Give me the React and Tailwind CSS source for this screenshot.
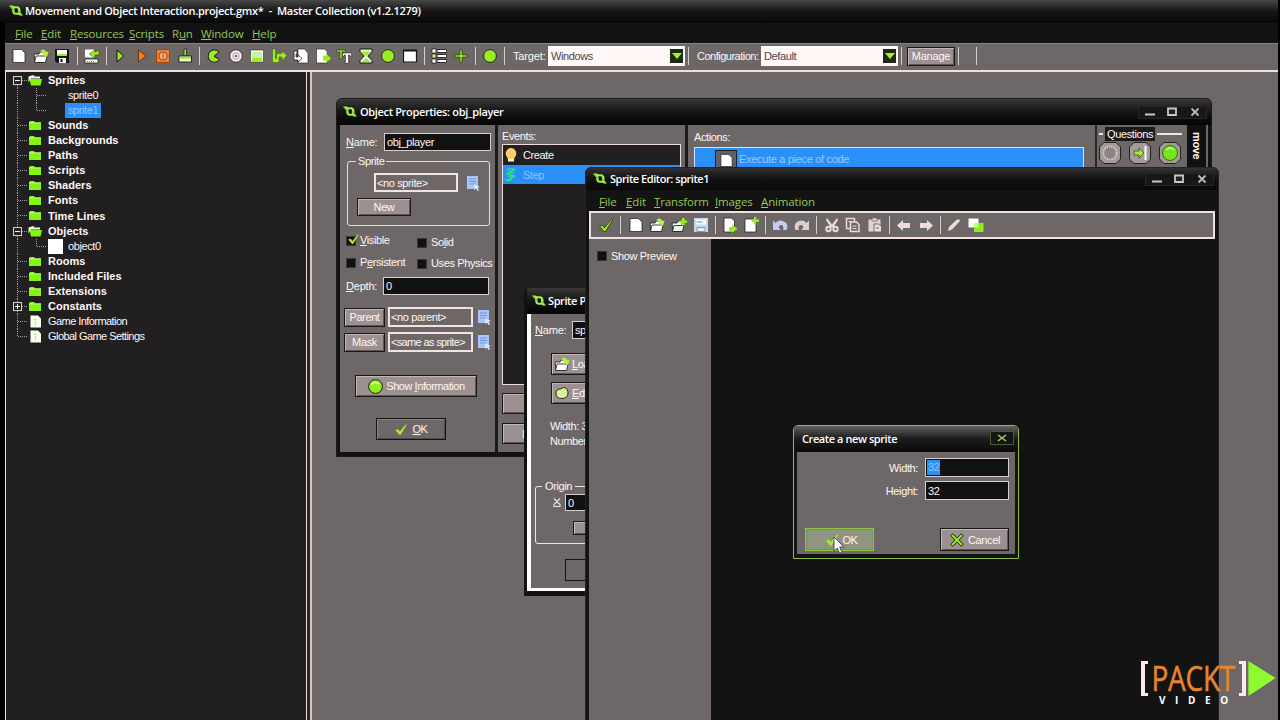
import React from "react";

const G = "#9bec26";
const ink = "#151515";

const Svg = ({ children, className = "w-4 h-4", vb = "0 0 16 16" }) => (
  <svg viewBox={vb} className={`shrink-0 ${className}`}>{children}</svg>
);

const icons = {
  page: <path d="M2 1.500h8.500l3.500 3.500v9.500H2z" fill="#fff" stroke={ink} strokeWidth=".7" />,
  open: (
    <>
      <path d="M1 6h5l1-2h5v10H2z" fill="#fdfdf4" stroke={ink} strokeWidth=".8" />
      <path d="M1.500 14.500l1.500-6.500h11l-1.500 6.500z" fill="#fff" stroke={ink} strokeWidth=".8" />
      <path d="M7 3.500Q10-.5 13.500 4l2-.5-1.500 5.500-5-2.500 1.800-1Q9.500 3.300 7 3.500z" fill="#b4f03c" />
    </>
  ),
  openAdd: (
    <>
      <path d="M1 6h5l1-2h4v10H2z" fill="#fdfdf4" stroke={ink} strokeWidth=".8" />
      <path d="M1.500 14.500l1.500-6h10l-1.500 6z" fill="#e6f7e8" stroke={ink} strokeWidth=".8" />
      <path d="M11 1h2.500v2.500H16V6h-2.500v2.500H11V6H8.500V3.500H11z" fill={G} />
    </>
  ),
  save: (
    <>
      <path d="M1 1h14v14H3l-2-2z" fill={ink} />
      <path d="M3 2h10v6H3z" fill="#fff" />
      <path d="M3 6h10v2H3z" fill={G} />
      <path d="M5 10h7v5H5z" fill="#fff" />
      <path d="M6.500 11h2v3h-2z" fill={ink} />
    </>
  ),
  savePale: (
    <>
      <path d="M1 1h14v14H1z" fill="#c8d8ea" />
      <path d="M3 2.500h10v5H3z" fill="#f4f8ff" />
      <path d="M3.500 5h6M4 10.500h8v4H4z" stroke="#8296aa" fill="#e4edf8" />
    </>
  ),
  exportBar: (
    <>
      <path d="M1 1.500h9v8H1z" fill="#fff" />
      <path d="M1 11h13v4H1z" fill="#f8fff0" stroke={ink} strokeWidth=".7" />
      <path d="M15 2v5h-4v3L5 6l6-4v2z" fill={G} stroke={ink} strokeWidth=".4" />
      <path d="M3 13.500h7" stroke="#888" strokeDasharray="1 1" />
    </>
  ),
  play: <path d="M5 2v12l6.500-6z" fill={G} stroke={ink} strokeWidth="1" />,
  debug: <path d="M4.500 2v12l7.500-6z" fill="#f47a1c" stroke="#6b3410" strokeWidth="1" />,
  stop: (
    <>
      <path d="M1.500 1.500h13v13h-13z" fill="#ee8136" stroke="#9a4410" />
      <circle cx="8" cy="8" r="4" fill="#f9b27a" stroke="#a14d14" strokeWidth="1" />
      <path d="M8 5.500v5" stroke="#a14d14" />
    </>
  ),
  broom: (
    <>
      <path d="M7 1h2.500v7H7z" fill={G} stroke={ink} strokeWidth=".7" />
      <path d="M2 8h12.500v6H2z" fill="#f5ffd8" stroke={ink} strokeWidth=".9" />
      <path d="M2.500 9h11.500v1.800H2.500z" fill={G} />
    </>
  ),
  pac: <path d="M13 4A6.200 6.200 0 1 0 13.500 11.500L8 8.300z" fill={G} stroke={ink} strokeWidth="1" />,
  sound: (
    <>
      <circle cx="8" cy="8" r="6.300" fill="#f4e8ec" stroke={ink} strokeWidth=".8" />
      <circle cx="8" cy="8" r="3.300" fill="none" stroke="#b3a6ab" />
      <circle cx="8" cy="8" r="1.200" fill="#6a6064" />
    </>
  ),
  bg: (
    <>
      <path d="M1.500 2h13v12h-13z" fill="#f4fde8" stroke={ink} strokeWidth=".5" />
      <path d="M3 10h10v3H3z" fill={G} />
      <path d="M3 4h10v6H3z" fill="#c9f2a4" />
    </>
  ),
  path: <path d="M1.500 1v13.500h6.500V9h3v3.500l5-5-5-4.500v2.500H5.500v5H4.500V1z" fill={G} stroke="#3e5a14" strokeWidth=".5" />,
  script: (
    <>
      <path d="M5 1h6.500l3.500 4v10H5z" fill="#fff" stroke={ink} strokeWidth=".6" />
      <path d="M1 3h3v3H3v3h2V7l4 3.500L5 14v-2H1z" fill="#fdfff4" stroke={ink} strokeWidth=".7" />
    </>
  ),
  shader: (
    <>
      <path d="M1.500 1h8l3 3v11h-11z" fill="#fff" stroke={ink} strokeWidth=".6" />
      <path d="M8 7.500h3V5l5 5.500-5 4.500v-2.500H8z" fill={G} />
    </>
  ),
  tt: (
    <>
      <path d="M1 2h8v3H7.500V3.800H6V11H3.800V3.800H2.500V5H1z" fill={G} stroke={ink} strokeWidth=".5" />
      <path d="M6.500 5h9v3.500H14V7h-1.500v7h1v1H8.500v-1h1V7H8v1.500H6.500z" fill="#fff" stroke={ink} strokeWidth=".5" />
    </>
  ),
  hourglass: (
    <>
      <path d="M2 1h12v2.500L9.800 8l4.200 4.500V15H2v-2.500L6.200 8 2 3.500z" fill="#e9ffd0" stroke={ink} strokeWidth="1" />
      <path d="M3.500 3.500h9L8 8zM8 10l4.500 4h-9z" fill={G} />
    </>
  ),
  ball: <circle cx="8" cy="8" r="6.400" fill={G} stroke={ink} strokeWidth=".9" />,
  info: (
    <>
      <circle cx="8" cy="8" r="6.500" fill="#8ff01c" stroke={ink} strokeWidth=".9" />
      <path d="M4.500 6a4.500 4.500 0 0 1 7 0" stroke="#e2ffb0" strokeWidth="1.200" fill="none" />
    </>
  ),
  room: (
    <>
      <path d="M1.500 2h13v12h-13z" fill="#fff" stroke={ink} strokeWidth="1.200" />
      <path d="M1.500 2h13v1.500h-13z" fill={ink} />
    </>
  ),
  list: (
    <>
      <path d="M1 1h4v4H1zM1 11h4v4H1z" fill="#fff" stroke={ink} strokeWidth=".7" />
      <path d="M1 6h4v4H1z" fill="#dff26a" stroke={ink} strokeWidth=".7" />
      <path d="M6 3h9.500M6 8h9.500M6 13h9.500" stroke={ink} strokeWidth="3.400" />
      <path d="M6.500 3h8.500M6.500 8h8.500M6.500 13h8.500" stroke="#fff" strokeWidth="1.900" />
    </>
  ),
  plus: <path d="M6.800 1.800h2.400v5h5v2.400h-5v5H6.800v-5h-5V6.800h5z" fill={G} stroke="#24340c" strokeWidth=".8" />,
  check: <path d="M1.500 9l3-.8L6.500 11 13.500 2l1.200.5L7.500 14.500 6 14.500z" fill={G} stroke="#1c2808" strokeWidth=".7" />,
  checkBare: <path d="M1 8.500l3.500-.8L6.500 10.500 14 1.500l1 .5L7.500 14.500H6z" fill="#a2f02c" />,
  pageNext: (
    <>
      <path d="M2 1h7.500l3 3v11H2z" fill="#fff" stroke={ink} strokeWidth=".7" />
      <path d="M7 10h3V7.500l5.500 4.500-5.500 4v-2H7z" fill={G} />
    </>
  ),
  pageAdd: (
    <>
      <path d="M2 2h11v13H2z" fill="#fff" stroke={ink} strokeWidth=".7" />
      <path d="M11 0h2.200v2.500H16V5h-2.800v2.500H11V5H8.500V2.500H11z" fill={G} />
    </>
  ),
  undo: <path d="M1 3.500l2.500 2.500Q7 2 12 4.500T14.500 13H11q1.500-5-2-5-1.500 0-2.500 2l2 3H1z" fill="#c4cdec" />,
  redo: <path d="M15 3.500l-2.500 2.500Q9 2 4 4.500T1.500 13H5Q3.500 8 7 8q1.500 0 2.500 2l-2 3H15z" fill="#e2ced2" />,
  cut: (
    <>
      <path d="M3 1l5 6.500L13 1l1 2-4.500 7h-3L2 3z" fill="#f0dada" />
      <circle cx="4.500" cy="12" r="2.200" fill="none" stroke="#f0dada" strokeWidth="2" />
      <circle cx="11.500" cy="12" r="2.200" fill="none" stroke="#f0dada" strokeWidth="2" />
    </>
  ),
  copy: (
    <>
      <path d="M1.500 1.500h8v10h-8z" fill="#6d6867" stroke="#f0dada" strokeWidth="1.500" />
      <path d="M5.500 5h6l2.500 2.500V14.500H5.500z" fill="#6d6867" stroke="#f0dada" strokeWidth="1.500" />
      <path d="M7.500 9h4M7.500 11.500h4M3.500 4.500h4" stroke="#f0dada" strokeWidth="1.200" />
    </>
  ),
  paste: (
    <>
      <path d="M1.500 2.500h12v12h-12z" fill="#e6d2d2" />
      <path d="M5 1h5v3H5z" fill="#f0dada" stroke="#6d6867" strokeWidth=".8" />
      <path d="M7 7h4.500L14.500 9.500V15H7z" fill="#f0dada" stroke="#6d6867" />
      <path d="M9 11h3" stroke="#6d6867" />
    </>
  ),
  left: <path d="M1 8.500l6-5.500v3h7v5H7v3z" fill="#f0dada" />,
  right: <path d="M15 8.500L9 3v3H2v5h7v3z" fill="#f0dada" />,
  pencil: <path d="M2 14l1-4L11 2.500q2.500-1 3 1.500L6 12.500z" fill="#f0dada" />,
  layers: (
    <>
      <path d="M0.500 1.500h10v9h-10z" fill="#fffdf4" />
      <path d="M6 6h9.500v9H6z" fill="#8fea20" />
      <path d="M6 6h4.500v4.500H6z" fill="#c8f58c" />
    </>
  ),
  menuList: (
    <>
      <path d="M2 1h11v13H2z" fill="#a9c6f8" />
      <path d="M4 4h7M4 6.500h7M4 9h7" stroke="#6f95dc" />
      <path d="M9 9l6 3-2.500.8L14 15.500l-1.500.5-1-2.500L9.500 15z" fill="#dce8ff" />
    </>
  ),
  shape: (
    <path d="M2 8.500Q2 4 6.500 4l3-1.500Q14 3 14 8t-6 5.500Q2 13.500 2 8.500z" fill="#d9f59a" stroke={ink} strokeWidth=".9" />
  ),
  x: (
    <>
      <path d="M2.500 2.500l11 11M13.500 2.500l-11 11" stroke="#1c2808" strokeWidth="3.600" />
      <path d="M3 3l10 10M13 3L3 13" stroke={G} strokeWidth="2" />
    </>
  ),
  bulb: (
    <>
      <path d="M8 1a5.500 5.500 0 0 1 3.500 9.500V12h-7v-1.500A5.500 5.500 0 0 1 8 1z" fill="#fbcf6c" />
      <path d="M5 12h6v2.500H5z" fill="#fff6dc" />
    </>
  ),
  step: (
    <>
      <path d="M4 3q4-2 8 0M3 6.500q5-2 8-.5M5 10q4-1.500 7 0M2.500 13.500q4-1.500 6.500 0" stroke="#1fd2a0" strokeWidth="2" fill="none" />
      <path d="M11 2L5 7l6 2-6 5" stroke="#3be27a" strokeWidth="1.400" fill="none" />
    </>
  ),
};

const Icon = ({ n, className }) => <Svg className={className}>{icons[n]}</Svg>;
const Cell = ({ n, className = "w-[21.75px]" }) => (
  <span className={`flex shrink-0 justify-center ${className}`}><Icon n={n} className="h-[16px] w-[16px]" /></span>
);
const Sep = ({ className = "w-2" }) => (
  <span className={`flex shrink-0 justify-center ${className}`}><i className="h-[18px] w-px bg-[#d9cccc]" /></span>
);

const Logo = () => (
  <Svg vb="0 0 14 12" className="h-[12px] w-[14px]">
    <path d="M0 .5h4l1 .8h3.500q2.800 .5 3 3.500v2.700l2.500 3h-3.500l-.8-.8H7q-3.500 0-3.800-3.500V4.500z" fill="#a4ec4a" />
    <path d="M5.500 3.800q0-.5.700-.5h1.500q1.300 0 1.300 1.500v2.300q0 .6-.7.600H7q-1.500 0-1.500-1.500z" fill="#0d120a" />
    <path d="M0 .5L5 5M9 5.500l5 5" stroke="#5f9426" strokeWidth=".6" />
  </Svg>
);

const Title = ({ children, className = "" }) => (
  <span className={`whitespace-pre font-['Open_Sans',sans-serif] text-[11px] font-semibold leading-4 text-white ${className}`}>{children}</span>
);

const Menu = ({ items, className }) => (
  <nav className={`flex font-['Open_Sans',sans-serif] text-[11.5px] leading-4 tracking-[-0.15px] text-[#97c756] ${className}`}>
    {items.map(([a, u, b, w]) => (
      <span key={a + u + b} className={`shrink-0 whitespace-nowrap ${w}`}>{a}<u className="underline-offset-1">{u}</u>{b}</span>
    ))}
  </nav>
);

const Win = ({ children, className }) => (
  <section className={`absolute flex flex-col overflow-hidden ${className}`}>{children}</section>
);

const WinButtons = () => (
  <div className="flex h-[13px] w-[69px] items-center justify-around border border-[#252525] bg-[#171717]">
    <Svg vb="0 0 12 10" className="h-[10px] w-[12px]"><path d="M1 7.500h10" stroke="#cfc6c6" strokeWidth="2" /></Svg>
    <Svg vb="0 0 12 10" className="h-[10px] w-[12px]"><path d="M2 1.500h8v6.500H2z" fill="#222" stroke="#cfc6c6" strokeWidth="1.800" /></Svg>
    <Svg vb="0 0 12 10" className="h-[10px] w-[12px]"><path d="M2.500 1.500l7 7M9.500 1.500l-7 7" stroke="#b9bdb0" strokeWidth="1.800" /></Svg>
  </div>
);

const Field = ({ children, className }) => (
  <span className={`flex items-center overflow-hidden whitespace-nowrap border border-[#d8cccc] bg-[#111] pl-[2px] ${className}`}>{children}</span>
);
const Slot = ({ children, className }) => (
  <span className={`flex items-center whitespace-nowrap border-2 border-[#f3e2e2] pl-px ${className}`}>{children}</span>
);
const Btn = ({ children, className }) => (
  <span className={`flex items-center justify-center border border-[#1a1818] bg-[#9c9090] shadow-[inset_1px_1px_0_#c2b6b6,inset_-1px_-1px_0_#5d5656] ${className}`}>{children}</span>
);
const Box = ({ on }) => (
  <i className="flex h-[10px] w-[10px] shrink-0 border border-[#3a3636] bg-[#111]">{on && <Icon n="checkBare" className="-mt-[4px] h-[12px] w-[13px]" />}</i>
);

const rows = [
  ["Sprites", "open", "-"], ["sprite0", "child"], ["sprite1", "sel"], ["Sounds", "dir"], ["Backgrounds", "dir"], ["Paths", "dir"],
  ["Scripts", "dir"], ["Shaders", "dir"], ["Fonts", "dir"], ["Time Lines", "dir"], ["Objects", "open", "-"], ["object0", "obj"],
  ["Rooms", "dir"], ["Included Files", "dir"], ["Extensions", "dir"], ["Constants", "dir", "+"], ["Game Information", "file"], ["Global Game Settings", "last"],
];

const Row = ({ label, kind, mark }) => {
  const child = kind === "child" || kind === "sel" || kind === "obj";
  const first = label === "Sprites";
  return (
    <li className="flex h-[15.12px] items-center">
      <Svg vb="0 0 42 15" className="h-[15.12px] w-[42px]">
        <g stroke="#a9a4a4" strokeWidth="1" strokeDasharray="1 1">
          <path d={first ? "M11.500 8V15" : kind === "last" ? "M11.500 0V8" : "M11.500 0V15"} />
          {child ? <path d={kind === "child" ? "M30.500 0V15M31 7.500h10" : "M30.500 0V8M31 7.500h10"} /> : <path d="M12 7.500h10" />}
        </g>
        {mark && <rect x="7.500" y="3.500" width="8" height="8" fill="#222" stroke="#d8d4cc" />}
        {mark && <path d={mark === "+" ? "M9 7.500h5M11.500 5v5" : "M9 7.500h5"} stroke="#fff" />}
        {kind === "dir" && <path d="M23 4.500l1-1.500h4l1 1.500h6V12H23z" fill="#84f412" />}
        {kind === "dir" && <path d="M23 4.800h12" stroke="#d9ffae" strokeWidth=".8" />}
        {kind === "open" && <path d="M22.500 9.500V3.500l5-1.500 1 1.500h5.500v2H25z" fill="#f2ffe0" />}
        {kind === "open" && <path d="M25 12.500l-1.500-6.500h12.500l-1.500 6.500z" fill="#84f412" />}
        {(kind === "file" || kind === "last") && <path d="M24.500 1.500h7.500l3 3V13.500h-10.500z" fill="#f7fff0" />}
        {(kind === "file" || kind === "last") && <path d="M28 5.500h3M29.500 7v4" stroke="#b7e89a" />}
      </Svg>
      {kind === "obj" && <i className="h-[15px] w-[15px] bg-white" />}
      {child ? (
        <span className={kind === "sel" ? "ml-[17px] bg-[#2a90f8] px-[3px] leading-[15px] tracking-[-0.4px] text-[#8cc6ff]" : kind === "obj" ? "ml-[5px] leading-[15px] tracking-[-0.4px]" : "ml-[20px] leading-[15px] tracking-[-0.4px]"}>{label}</span>
      ) : (
        <span className={kind === "file" || kind === "last" ? "leading-[15px] tracking-[-0.56px]" : "font-bold leading-[15px] tracking-[0.02px]"}>{label}</span>
      )}
    </li>
  );
};

const Select = ({ children }) => (
  <span className="flex h-[20px] w-[137px] shrink-0 items-center justify-between bg-[#fff6f6] pl-[3px] pr-[2px] text-[#4c4848]">
    {children}
    <i className="flex h-[14px] w-[13px] items-center justify-center bg-[#1c2a10]">
      <Svg vb="0 0 10 6" className="h-[6px] w-[10px]"><path d="M0 0h10L5 6z" fill="#a6f02c" /></Svg>
    </i>
  </span>
);

const ObjectProperties = () => (
  <Win className="left-[336px] top-[98px] h-[359px] w-[876px] rounded-t-[6px] border border-[#1a1919] bg-[#131212]">
    <header className="flex h-[26px] shrink-0 items-center justify-between bg-gradient-to-b from-[#3a3838] via-[#151515] to-[#050505] pl-[6px] pr-[4px]">
      <div className="flex items-center gap-[3px]"><Logo /><Title className="tracking-[-0.34px]">Object Properties: obj_player</Title></div>
      <WinButtons />
    </header>
    <div className="mx-[3px] mb-[4px] flex min-h-0 flex-1 bg-[#6d6867]">
      <div className="flex w-[155px] shrink-0 flex-col pl-[6px]">
        <div className="mt-[8px] flex h-[18px] items-center"><span className="w-[38px] tracking-[-0.2px]"><u>N</u>ame:</span><Field className="h-[18px] w-[107px]">obj_player</Field></div>
        <fieldset className="ml-[1px] mt-[3px] flex h-[72px] w-[143px] flex-col rounded-[3px] border-[1.5px] border-[#eadada] pl-[12px]">
          <legend className="-ml-[4px] h-[15px] px-[2px] leading-[15px]">Sprite</legend>
          <div className="mt-[4px] ml-[14px] flex items-center gap-[7px]"><Slot className="h-[19px] w-[84px]">&lt;no sprite&gt;</Slot><Icon n="menuList" /></div>
          <Btn className="-ml-[3px] mt-[6px] h-[18px] w-[54px]">New</Btn>
        </fieldset>
        <div className="mt-[4px] grid grid-cols-[71px_1fr] gap-y-[2px] leading-[17px]">
          <span className="flex items-center gap-[4px]"><Box on /><span><u>V</u>isible</span></span>
          <span className="mt-[4px] flex items-center gap-[4px]"><Box /><span>So<u>l</u>id</span></span>
          <span className="flex items-center gap-[4px]"><Box /><span>P<u>e</u>rsistent</span></span>
          <span className="mt-[2px] flex items-center gap-[4px] whitespace-nowrap"><Box />Uses Physics</span>
        </div>
        <div className="mt-[5px] flex items-center"><span className="w-[37px] tracking-[-0.2px]"><u>D</u>epth:</span><Field className="h-[18px] w-[106px]">0</Field></div>
        <div className="-ml-[2px] mt-[12px] flex items-center"><Btn className="h-[19px] w-[41px]">Parent</Btn><Slot className="ml-[3px] h-[20px] w-[85px]">&lt;no parent&gt;</Slot><Icon n="menuList" className="ml-[3px] h-4 w-4" /></div>
        <div className="-ml-[2px] mt-[5px] flex items-center"><Btn className="h-[19px] w-[41px]">Mask</Btn><Slot className="ml-[3px] h-[20px] w-[85px] tracking-[-0.65px]">&lt;same as sprite&gt;</Slot><Icon n="menuList" className="ml-[3px] h-4 w-4" /></div>
        <Btn className="ml-[9px] mt-[23px] h-[22px] w-[122px] gap-[2px]"><Icon n="info" className="h-[17px] w-[17px]" /><span className="tracking-[-0.45px]">Show <u>I</u>nformation</span></Btn>
        <span className="ml-[30px] mt-[21px] flex h-[22px] w-[70px] items-center justify-center gap-1 border border-[#151313] shadow-[inset_1px_1px_0_#8a8282,inset_-1px_-1px_0_#4f4a4a]"><Icon n="checkBare" className="h-[13px] w-[14px]" /><span><u>O</u>K</span></span>
      </div>
      <div className="flex w-[193px] shrink-0 flex-col border-x-[3px] border-[#1b1919] pl-[4px] pr-[4px]">
        <span className="mt-[4px] leading-[15px]">Events:</span>
        <div className="flex h-[241px] w-[179px] flex-col border border-[#efdcdc] bg-[#221f20]">
          <span className="flex h-[20px] items-center gap-1"><Icon n="bulb" />Create</span>
          <span className="flex h-[19px] items-center gap-1 bg-[#2a90f8] text-[#8cc6ff]"><Icon n="step" />Step</span>
        </div>
        <Btn className="mt-[8px] h-[21px] w-[88px]" />
        <Btn className="mt-[9px] h-[21px] w-[88px] !justify-start pl-[19px]">Delete</Btn>
      </div>
      <div className="flex w-[407px] shrink-0 flex-col pl-[6px]">
        <span className="mt-[4px] leading-[16px]">Actions:</span>
        <div className="mt-[2px] flex h-[40px] w-[390px] items-start border border-[#cfe4ff] bg-[#2a90f8] pl-[20px]">
          <i className="mt-[2px] flex h-[21px] w-[22px] items-center justify-center border border-[#1d2430] bg-[#5f6068]"><Icon n="page" className="h-[15px] w-[15px]" /></i>
          <span className="ml-[2px] mt-[3px] leading-4 tracking-[-0.32px] text-[#94caff]">Execute a piece of code</span>
        </div>
      </div>
      <div className="flex w-[92px] shrink-0 flex-col border-l-2 border-[#2a2727]">
        <div className="mt-[2px] flex h-[14px] items-center gap-[2px] pr-[5px]"><i className="ml-[2px] h-[2px] w-[4px] bg-[#f3e2e2]" /><span className="bg-[#1c1919] px-[2px] leading-[14px]">Questions</span><i className="h-[2px] flex-1 bg-[#f3e2e2]" /></div>
        <div className="mt-[1px] flex gap-[8px] pl-[2px]">
          {[0, 1, 2].map((k) => (
            <Svg key={k} vb="0 0 22 22" className="h-[22px] w-[22px]">
              <path d="M5 .5h12L21.500 5v12L17 21.500H5L.5 17V5z" fill="#a59b9b" stroke="#242121" />
              {k === 0 && <circle cx="11" cy="11" r="6.500" fill="#8d8484" stroke="#eee4e4" strokeWidth="1.600" strokeDasharray="1.200 1.200" />}
              {k === 1 && <path d="M5 9h5V6l5 5-5 5v-3H5z" fill="#a8e838" stroke="#25400e" strokeWidth=".7" />}
              {k === 1 && <path d="M16.500 4v14" stroke="#fff" strokeWidth="2" />}
              {k === 2 && <circle cx="11" cy="11" r="7.500" fill="#74e51c" stroke="#356b10" />}
              {k === 2 && <path d="M7 8q4-4 8 0" stroke="#b8ff70" strokeWidth="1.500" fill="none" />}
            </Svg>
          ))}
        </div>
      </div>
      <div className="flex w-[19px] justify-center bg-[#111] pt-[7px]"><span className="h-[26px] font-bold leading-[16px] [writing-mode:vertical-rl]">move</span></div>
    </div>
  </Win>
);

const SpriteProperties = () => (
  <Win className="left-[524px] top-[288px] h-[308px] w-[200px] rounded-tl-[6px] bg-[#131212] pl-[3px]">
    <header className="flex h-[26px] shrink-0 items-center gap-[2px] bg-gradient-to-b from-[#3a3838] via-[#151515] to-[#050505] pl-[5px]"><Logo /><Title className="tracking-[-0.4px]">Sprite Properties: sprite1</Title></header>
    <div className="mb-[5px] flex flex-1 flex-col border-b-[3px] border-l-[4px] border-white bg-[#6d6867] pl-[4px]">
      <div className="mt-[7px] flex items-center"><span className="w-[37px] tracking-[-0.2px]"><u>N</u>ame:</span><Field className="h-[18px] w-[100px]">sprite1</Field></div>
      <Btn className="ml-[16px] mt-[14px] h-[22px] w-[110px] !justify-start gap-[2px] pl-[2px]"><Icon n="open" /><span><u>L</u>oad Sprite</span></Btn>
      <Btn className="ml-[16px] mt-[7px] h-[22px] w-[110px] !justify-start gap-[2px] pl-[2px]"><Icon n="shape" /><span><u>E</u>dit Sprite</span></Btn>
      <span className="ml-[15px] mt-[15px] leading-[15px]">Width: 32</span>
      <span className="ml-[15px] leading-[15px]">Number of subimages: 1</span>
      <fieldset className="mt-[30px] flex h-[65px] w-[150px] flex-col rounded-[3px] border border-[#f0e6dc]">
        <legend className="ml-[6px] h-[15px] px-[3px] leading-[15px]">Origin</legend>
        <div className="flex items-center"><Svg vb="0 0 8 10" className="ml-[17px] mr-[4px] h-[11px] w-[8px]"><path d="M1 1l6 6v2H1V7l6-6" fill="none" stroke="#eee4e4" strokeWidth="1.100" /></Svg><Field className="h-[17px] w-[60px]">0</Field></div>
        <Btn className="ml-[37px] mt-[10px] h-[14px] w-[60px]" />
      </fieldset>
      <span className="ml-[30px] mt-[15px] h-[22px] w-[80px] border border-[#151313]" />
    </div>
  </Win>
);

const SpriteEditor = () => (
  <Win className="left-[585px] top-[167px] h-[560px] w-[634px] rounded-t-[6px] border border-[#242424] bg-[#131313]">
    <header className="flex h-[22px] shrink-0 items-center justify-between bg-gradient-to-b from-[#333] via-[#111] to-[#080808] pl-[7px] pr-[4px]">
      <div className="flex items-center gap-[3px]"><Logo /><Title className="tracking-[-0.45px]">Sprite Editor: sprite1</Title></div>
      <WinButtons />
    </header>
    <Menu className="h-[21px] shrink-0 pl-[13px] pt-[4px]" items={[["", "F", "ile", "w-[27px]"], ["", "E", "dit", "w-[28px]"], ["", "T", "ransform", "w-[61px]"], ["", "I", "mages", "w-[46px]"], ["", "A", "nimation", "w-[60px]"]]} />
    <div className="mx-[3px] flex h-[28px] w-[626px] shrink-0 items-center border-2 border-[#f0e0e0] bg-[#6d6867] pl-[4px]">
      <Cell n="check" /><Sep className="w-[8px]" />
      <Cell n="page" /><Cell n="open" /><Cell n="openAdd" /><Cell n="savePale" /><Sep className="w-[7px]" />
      <Cell n="pageNext" /><Cell n="pageAdd" /><Sep className="w-[7px]" />
      <Cell n="undo" /><Cell n="redo" /><Sep className="w-[8px]" />
      <Cell n="cut" /><Cell n="copy" /><Cell n="paste" /><Sep className="w-[7px]" />
      <Cell n="left" /><Cell n="right" /><Sep className="w-[7px]" />
      <Cell n="pencil" /><Cell n="layers" />
    </div>
    <div className="flex flex-1 pl-[3px]">
      <aside className="w-[122px] bg-[#6d6867] pl-[8px] pt-[9px]"><span className="flex items-center gap-[4px] leading-4 tracking-[-0.35px]"><Box />Show Preview</span></aside>
    </div>
  </Win>
);

const NewSprite = () => (
  <Win className="left-[793px] top-[425px] h-[134px] w-[226px] rounded-t-[5px] border border-[#8dbb4c] bg-[#141414]">
    <header className="flex h-[26px] shrink-0 items-center justify-between bg-gradient-to-b from-[#646060] via-[#1c1b1b] to-[#0b0b0b] pl-[8px] pr-[4px]">
      <Title className="tracking-[-0.42px]">Create a new sprite</Title>
      <i className="mb-[2px] flex h-[14px] w-[24px] items-center justify-center border border-[#4a5a34] bg-[#161616]"><Svg vb="0 0 10 8" className="h-[8px] w-[10px]"><path d="M1 1l8 6M9 1L1 7" stroke="#a8cf5c" strokeWidth="1.500" /></Svg></i>
    </header>
    <div className="mx-[3px] mb-[4px] flex flex-1 flex-col bg-[#6d6867] pr-[6px]">
      <div className="mt-[6px] flex items-center justify-end gap-[7px]"><span>Width:</span><Field className="h-[19px] w-[84px]"><b className="-ml-px bg-[#2a90f8] px-px font-normal leading-[15px] text-[#8cc6ff]">32</b></Field></div>
      <div className="mt-[4px] flex items-center justify-end gap-[7px]"><span>Height:</span><Field className="h-[19px] w-[84px]">32</Field></div>
      <div className="mt-[28px] flex justify-between pl-[8px]">
        <span className="flex h-[23px] w-[69px] items-center justify-center gap-[3px] border border-[#8fc944] bg-[#8f9580] shadow-[inset_0_0_0_1px_#79905a]"><Icon n="checkBare" className="ml-1 h-[14px] w-[14px]" />OK</span>
        <Btn className="h-[23px] w-[69px] gap-[3px]"><Icon n="x" />Cancel</Btn>
      </div>
    </div>
  </Win>
);

export default function App() {
  return (
    <main className="relative flex h-[720px] w-[1280px] flex-col overflow-hidden bg-black pl-[5px] pr-[2px] font-['Liberation_Sans',Arial,sans-serif] text-[11px] leading-[14px] tracking-[-0.38px] text-[#fff6f6]">
      <header className="-ml-[5px] flex h-[23px] shrink-0 items-center gap-[2px] bg-gradient-to-b from-[#484848] via-[#161616] to-[#080808] pb-px pl-[9px]">
        <Logo /><Title className="tracking-[-0.3px]">{"Movement and Object Interaction.project.gmx*  -  Master Collection (v1.2.1279)"}</Title>
      </header>
      <Menu className="h-[20px] shrink-0 bg-[#121212] pl-[10px] pt-[3px]" items={[["", "F", "ile", "w-[26px]"], ["", "E", "dit", "w-[29px]"], ["", "R", "esources", "w-[59px]"], ["", "S", "cripts", "w-[43px]"], ["R", "u", "n", "w-[29px]"], ["", "W", "indow", "w-[51px]"], ["", "H", "elp", "w-[30px]"]]} />
      <div className="flex h-[27px] shrink-0 items-center border-t border-[#8c8282] bg-[#6d6867] pb-[2px] pl-[3px]">
        <Cell n="page" /><Cell n="open" /><Cell n="save" /><Sep className="w-[8px]" />
        <Cell n="exportBar" /><Sep className="w-[6px]" />
        <Cell n="play" /><Cell n="debug" /><Cell n="stop" /><Cell n="broom" /><Sep className="w-[7px]" />
        <Cell n="pac" /><Cell n="sound" /><Cell n="bg" /><Cell n="path" /><Cell n="script" /><Cell n="shader" /><Cell n="tt" /><Cell n="hourglass" /><Cell n="ball" /><Cell n="room" /><Sep className="w-[8px]" />
        <Cell n="list" /><Cell n="plus" /><Sep className="w-[6px]" />
        <Cell n="ball" className="w-[24px]" /><Sep className="w-[4px]" />
        <span className="ml-[7px] w-[35px] shrink-0 tracking-[-0.15px]">Target:</span>
        <Select>Windows</Select><Sep className="w-[7px]" />
        <span className="ml-[5px] w-[64px] shrink-0 tracking-[-0.5px]">Configuration:</span>
        <Select>Default</Select><Sep className="w-[6px]" />
        <Btn className="ml-[3px] h-[19px] w-[48px] shrink-0 tracking-[-0.2px]">Manage</Btn><Sep className="w-[7px]" /><Sep className="ml-[10px] w-[8px]" />
      </div>
      <div className="flex min-h-0 flex-1 border-t-2 border-[#efdfdf]">
        <aside className="w-[302px] shrink-0 border-x border-[#efdfdf] bg-[#221f20]">
          <ul className="pt-[0.5px]">{rows.map(([l, k, m]) => <Row key={l} label={l} kind={k} mark={m} />)}</ul>
        </aside>
        <div className="w-[3px] bg-[#2a2526]" />
        <div className="flex-1 border-l-2 border-[#d9c6c6] bg-[#6d6867]" />
      </div>

      <ObjectProperties />
      <SpriteProperties />
      <SpriteEditor />
      <NewSprite />

      <div className="absolute left-[1141px] top-[655px] flex items-start">
        <div className="flex w-[105px] flex-col">
          <div className="flex h-[41px] items-center justify-between">
            <i className="mt-[6px] h-[35px] w-[7px] border-y-[3px] border-l-[4px] border-[#fbe9ee]" />
            <span className="mt-[5px] flex w-[87px] justify-center"><span className="origin-center scale-x-[0.8] font-['Open_Sans',sans-serif] text-[35px] leading-[30px] tracking-[-0.3px] text-[#e6862c] [-webkit-text-stroke:0.5px_#e6862c]">PACKT</span></span>
            <i className="mt-[6px] h-[35px] w-[7px] border-y-[3px] border-r-[4px] border-[#fbe9ee]" />
          </div>
          <span className="ml-[18px] whitespace-nowrap font-['Open_Sans',sans-serif] text-[10px] font-bold leading-[8px] tracking-[9.6px] text-white">VIDEO</span>
        </div>
        <Svg vb="0 0 28 36" className="ml-[2px] mt-[6px] h-[35px] w-[28px]"><path d="M0 0l28 17.500L0 36z" fill="#8dfb30" /></Svg>
      </div>
      <Svg vb="0 0 12 18" className="absolute left-[833px] top-[536px] h-[18px] w-[12px]"><path d="M1 1v14l3.300-3 2.400 5.300 2.300-1L6.700 11H11z" fill="#fff" stroke="#333" strokeWidth=".8" /></Svg>
    </main>
  );
}
